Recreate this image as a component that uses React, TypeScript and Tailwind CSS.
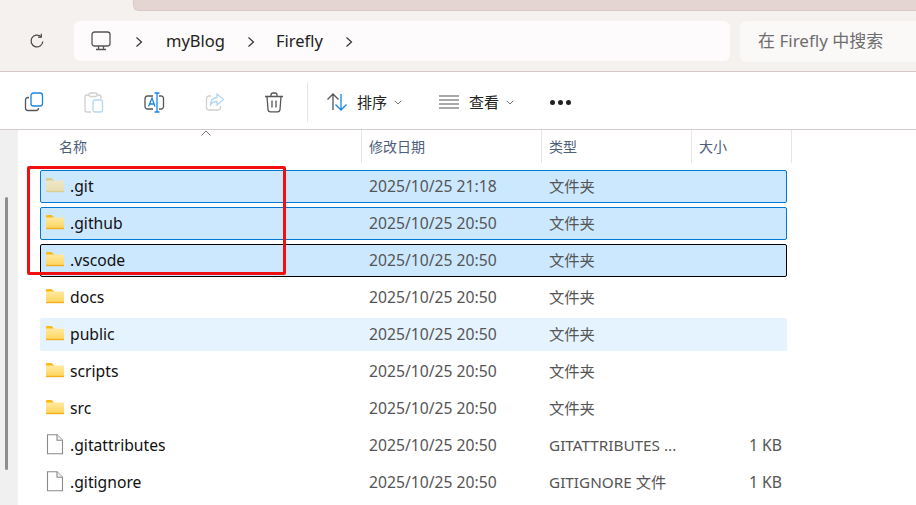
const fontStack = { fontFamily: '"Noto Sans", "Noto Sans CJK SC", sans-serif' };

const FolderIcon = ({ dim = false }: { dim?: boolean }) => {
  const id = dim ? "folder-dim" : "folder-main";
  return (
    <svg width="20" height="18" viewBox="0 0 20 18" className="shrink-0">
      <defs>
        <linearGradient id={id} x1="0" y1="0" x2="0" y2="1">
          <stop offset="0" stopColor={dim ? "#ede7c8" : "#ffe9a0"} />
          <stop offset="1" stopColor={dim ? "#e6deb0" : "#ffd45a"} />
        </linearGradient>
      </defs>
      <path d="M1 2a1 1 0 0 1 1-1h4.500l3 3H1z" fill={dim ? "#d9cd8f" : "#fdb913"} />
      <rect x="1" y="3.500" width="18" height="11.500" rx="0.800" fill={`url(#${id})`} />
      <rect x="1" y="13.800" width="18" height="1.400" fill={dim ? "#d9cd8f" : "#f2b01e"} />
    </svg>
  );
};

const FileIcon = () => (
  <svg width="20" height="22" viewBox="0 0 20 22" className="shrink-0">
    <path d="M2.500 .8h9.500l5.500 5.500v13.500h-15z" fill="#fff" stroke="#8a8a8a" strokeWidth="1.100" />
    <path d="M12 .8v5.500h5.500" fill="#f0f0f0" stroke="#8a8a8a" strokeWidth="1.100" />
  </svg>
);

const Chevron = () => (
  <svg width="8" height="12" viewBox="0 0 8 12" fill="none" stroke="#333" strokeWidth="1.200" className="mt-[2px]">
    <path d="M1.500 1.500 6.500 6l-5 4.500" />
  </svg>
);

const SmallCaret = () => (
  <svg width="8" height="5" viewBox="0 0 8 5" fill="none" stroke="#777" strokeWidth="1">
    <path d="M.8.800 4 4l3.200-3.200" />
  </svg>
);

type Row = {
  name: string;
  date: string;
  kind: string;
  size?: string;
  state?: "selected" | "focused" | "hover";
  icon: "folder" | "dim" | "file";
};

const rows: Row[] = [
  { name: ".git", date: "2025/10/25 21:18", kind: "文件夹", state: "selected", icon: "dim" },
  { name: ".github", date: "2025/10/25 20:50", kind: "文件夹", state: "selected", icon: "folder" },
  { name: ".vscode", date: "2025/10/25 20:50", kind: "文件夹", state: "focused", icon: "folder" },
  { name: "docs", date: "2025/10/25 20:50", kind: "文件夹", icon: "folder" },
  { name: "public", date: "2025/10/25 20:50", kind: "文件夹", state: "hover", icon: "folder" },
  { name: "scripts", date: "2025/10/25 20:50", kind: "文件夹", icon: "folder" },
  { name: "src", date: "2025/10/25 20:50", kind: "文件夹", icon: "folder" },
  { name: ".gitattributes", date: "2025/10/25 20:50", kind: "GITATTRIBUTES ...", size: "1 KB", icon: "file" },
  { name: ".gitignore", date: "2025/10/25 20:50", kind: "GITIGNORE 文件", size: "1 KB", icon: "file" },
];

const rowClass = (state?: Row["state"]) => {
  if (state === "selected") return "bg-[#cce8ff] border-[#0078d4]";
  if (state === "focused") return "bg-[#cce8ff] border-black";
  if (state === "hover") return "bg-[#e5f3ff] border-[#e5f3ff]";
  return "bg-white border-white";
};

export default function App() {
  return (
    <div className="relative w-[916px] h-[505px] overflow-hidden bg-white" style={fontStack}>
      {/* Tab strip */}
      <div className="h-[11px] bg-[#f5f1ef] pl-[133px]">
        <div className="h-full bg-[#e4d5d3] rounded-bl-[6px] border-b border-l border-[#d9c8c6]" />
      </div>

      {/* Address row */}
      <div className="h-[61px] bg-[#f5f1ef] border-b border-[#d5c9c7] flex items-center">
        <div className="w-[74px] flex justify-center">
          <svg width="18" height="18" viewBox="0 0 18 18" fill="none" stroke="#444" strokeWidth="1.200">
            <path d="M14.800 9.500A5.900 5.900 0 1 1 13 4.700" />
            <path d="M13.300 1.800v3.300H10" />
          </svg>
        </div>
        <div className="w-[656px] h-[40px] bg-[#fdfbfb] rounded-[6px] flex items-center text-[#222] text-[16.500px]">
          <svg width="20" height="20" viewBox="0 0 20 20" fill="none" stroke="#555" strokeWidth="1.300" className="ml-[17px]">
            <rect x="1" y="1" width="18" height="14" rx="2.500" />
            <path d="M7.500 15v3M12.500 15v3M5 18.500h10" />
          </svg>
          <div className="ml-[24px]"><Chevron /></div>
          <span className="ml-[23px]">myBlog</span>
          <div className="ml-[22px]"><Chevron /></div>
          <span className="ml-[21px]">Firefly</span>
          <div className="ml-[22px]"><Chevron /></div>
        </div>
        <div className="ml-[10px] flex-1 h-[41px] bg-[#fbf8f8] rounded-l-[6px] flex items-center pl-[18px] text-[#6e6e6e] text-[17px]">
          在 Firefly 中搜索
        </div>
      </div>

      {/* Command bar */}
      <div className="h-[58px] bg-white border-b border-[#d5cccb] flex items-center pt-[3px] text-[#222] text-[14px]">
        <svg width="20" height="20" viewBox="0 0 20 20" fill="none" strokeWidth="1.300" className="ml-[24px]">
          <path d="M5 5.500H4a2.500 2.500 0 0 0-2.500 2.500v8A2.500 2.500 0 0 0 4 18.500h8a2.500 2.500 0 0 0 2.500-2.500" stroke="#555" />
          <rect x="7" y="1" width="11.500" height="13" rx="2.500" stroke="#1a86e0" />
        </svg>
        <svg width="20" height="21" viewBox="0 0 20 21" fill="none" strokeWidth="1.300" className="ml-[40px]">
          <path d="M5 3H3a2 2 0 0 0-2 2v13a2 2 0 0 0 2 2h4M13 3h2a2 2 0 0 1 2 2v2" stroke="#d0d0d0" />
          <rect x="5" y="1" width="8" height="3.500" rx="1.500" stroke="#d0d0d0" />
          <rect x="9" y="8" width="9.500" height="12" rx="2" stroke="#b5d8f5" />
        </svg>
        <svg width="22" height="21" viewBox="0 0 22 21" fill="none" strokeWidth="1.300" className="ml-[40px]">
          <path d="M9 4H3.500A2.500 2.500 0 0 0 1 6.500v8A2.500 2.500 0 0 0 3.500 17H9M15 4h1.500A2.500 2.500 0 0 1 19.500 6.500v8a2.500 2.500 0 0 1-3 2.500H15" stroke="#555" />
          <path d="M13 1v19M10.500 1h5M10.500 20h5" stroke="#1a86e0" />
          <path d="M4.500 14.500 8 6l3 8.500M5.500 12h5" stroke="#1a86e0" />
        </svg>
        <svg width="20" height="20" viewBox="0 0 20 20" fill="none" strokeWidth="1.300" className="ml-[39px]">
          <path d="M6 4H4a2.500 2.500 0 0 0-2.500 2.500v9A2.500 2.500 0 0 0 4 18h9a2.500 2.500 0 0 0 2.500-2.500V14" stroke="#d0d0d0" />
          <path d="M12 2l6.500 5.500L12 13V9.500c-3 0-5 1-6.500 3.500 0-4 2.500-7 6.500-7.500z" stroke="#b5d8f5" />
        </svg>
        <svg width="20" height="21" viewBox="0 0 20 21" fill="none" stroke="#555" strokeWidth="1.300" className="ml-[39px]">
          <path d="M1 4.500h18M7 4.500V3a2 2 0 0 1 2-2h2a2 2 0 0 1 2 2v1.500M3 4.500l1 13a2.500 2.500 0 0 0 2.500 2.300h7a2.500 2.500 0 0 0 2.500-2.300l1-13M8 8.500v7M12 8.500v7" />
        </svg>
        <div className="ml-[23px] w-px h-[40px] bg-[#e8e4e3]" />
        <svg width="22" height="20" viewBox="0 0 22 20" fill="none" strokeWidth="1.300" className="ml-[18px]">
          <path d="M7 18V2M1.500 7.500 7 2l5.500 5.500" stroke="#555" />
          <path d="M15 2v16M9.500 12.500 15 18l5.500-5.500" stroke="#1a86e0" />
        </svg>
        <span className="ml-[9px] text-[15px]">排序</span>
        <div className="ml-[7px]"><SmallCaret /></div>
        <svg width="20" height="14" viewBox="0 0 20 14" fill="none" stroke="#555" strokeWidth="1.200" className="ml-[37px]">
          <path d="M0 1h20M0 5h20M0 9h20M0 13h20" />
        </svg>
        <span className="ml-[10px] text-[15px]">查看</span>
        <div className="ml-[7px]"><SmallCaret /></div>
        <div className="ml-[36px] flex gap-[3px]">
          <div className="w-[5px] h-[5px] rounded-full bg-[#222]" />
          <div className="w-[5px] h-[5px] rounded-full bg-[#222]" />
          <div className="w-[5px] h-[5px] rounded-full bg-[#222]" />
        </div>
      </div>

      <div className="flex h-[375px]">
        {/* Scroll track */}
        <div className="w-[17px] bg-[#f0f0f0] shrink-0 pl-[5px] pt-[67px]">
          <div className="w-[3px] h-[273px] bg-[#8e8e8e] rounded-full" />
        </div>
        <div className="flex-1 border-l border-[#f4f4f4]">
          {/* Column headers */}
          <div className="relative h-[33px] flex text-[14px] text-[#4c607a]">
            <div className="w-[344px] h-full pl-[41px] flex items-center border-r border-[#e6e6e6]">名称</div>
            <div className="w-[180px] h-full pl-[7px] flex items-center border-r border-[#e6e6e6]">修改日期</div>
            <div className="w-[150px] h-full pl-[7px] flex items-center border-r border-[#e6e6e6]">类型</div>
            <div className="w-[100px] h-full pl-[7px] flex items-center border-r border-[#e6e6e6]">大小</div>
            <svg width="12" height="6" viewBox="0 0 12 6" fill="none" stroke="#777" strokeWidth="1" className="absolute left-[182px] top-[0px]">
              <path d="M1.500 5.500 6 1l4.500 4.500" />
            </svg>
          </div>

          {/* File rows */}
          <div className="pt-[7px] pl-[22px] flex flex-col gap-[4px] w-[769px]">
            {rows.map((row) => (
              <div
                key={row.name}
                className={`h-[33px] flex items-center border rounded-[2px] text-[15.700px] ${rowClass(row.state)}`}
              >
                <div className="w-[328px] flex items-center pl-[4px] text-[#111]">
                  {row.icon === "file" ? <FileIcon /> : <FolderIcon dim={row.icon === "dim"} />}
                  <span className="ml-[5px]">{row.name}</span>
                </div>
                <div className="w-[180px] text-[#555]">{row.date}</div>
                <div className="w-[150px] text-[#555] whitespace-nowrap text-[15.300px] pb-[1px]">{row.kind}</div>
                <div className="flex-1 text-right pr-[4px] text-[#555]">{row.size}</div>
              </div>
            ))}
          </div>
        </div>
      </div>

      {/* Red annotation box */}
      <div className="absolute left-[27px] top-[166px] w-[259px] h-[109px] border-[3px] border-[#f01010] rounded-[2px]" />
    </div>
  );
}
